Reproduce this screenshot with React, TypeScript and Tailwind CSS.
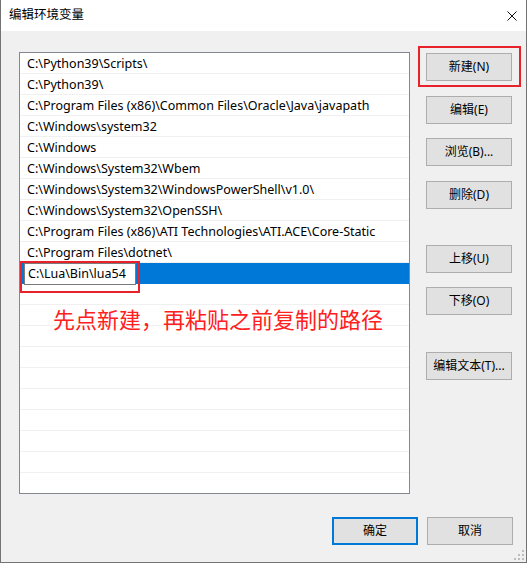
import React from "react";

const paths = [
  "C:\\Python39\\Scripts\\",
  "C:\\Python39\\",
  "C:\\Program Files (x86)\\Common Files\\Oracle\\Java\\javapath",
  "C:\\Windows\\system32",
  "C:\\Windows",
  "C:\\Windows\\System32\\Wbem",
  "C:\\Windows\\System32\\WindowsPowerShell\\v1.0\\",
  "C:\\Windows\\System32\\OpenSSH\\",
  "C:\\Program Files (x86)\\ATI Technologies\\ATI.ACE\\Core-Static",
  "C:\\Program Files\\dotnet\\",
];

const font = { fontFamily: '"Noto Sans", "Noto Sans CJK SC", sans-serif' };

function Btn({ label, className = "" }: { label: string; className?: string }) {
  return (
    <div
      className={`w-[86px] h-[28px] flex items-center justify-center bg-[#e1e1e1] border border-[#adadad] text-[12px] text-black ${className}`}
    >
      {label}
    </div>
  );
}

export default function App() {
  const rows = Array.from({ length: 22 }, (_, i) => i);
  return (
    <div
      className="relative w-[527px] h-[563px] flex flex-col bg-[#f0f0f0] border-x border-b border-[#737373] overflow-hidden"
      style={font}
    >
      {/* title bar */}
      <div className="h-[31px] bg-white flex items-center justify-between pl-[8px] shrink-0">
        <span className="text-[12.5px] text-black">编辑环境变量</span>
        <svg width="10" height="10" viewBox="0 0 10 10" className="mr-[9px]">
          <path d="M0.5 0.5 L9.5 9.5 M9.5 0.5 L0.5 9.5" stroke="#111" strokeWidth="1" />
        </svg>
      </div>

      <div className="flex-1 flex flex-col pt-[21px] pl-[18px] pr-[13px]">
        <div className="flex">
          {/* list */}
          <div className="w-[391px] h-[442px] border border-[#828790] bg-white overflow-hidden">
            {rows.map((i) => {
              if (i < paths.length) {
                return (
                  <div
                    key={i}
                    className="h-[21px] border-b border-[#f0f0f0] flex items-center pl-[7px] pt-[2px] text-[12.5px] text-black whitespace-nowrap"
                  >
                    {paths[i]}
                  </div>
                );
              }
              if (i === paths.length) {
                return (
                  <div key={i} className="h-[21px] bg-[#0078d7] flex items-center">
                    <div className="ml-[4px] w-[112px] h-[22px] bg-white border border-[#7a7a7a] flex items-center pl-[3px] pt-[1px] text-[12.5px] text-black">
                      C:\Lua\Bin\lua54
                    </div>
                  </div>
                );
              }
              return <div key={i} className="h-[21px] border-b border-[#f0f0f0]" />;
            })}
          </div>

          {/* buttons */}
          <div className="ml-[16px] flex flex-col pt-[1px]">
            <Btn label="新建(N)" />
            <Btn label="编辑(E)" className="mt-[15px]" />
            <Btn label="浏览(B)..." className="mt-[14px]" />
            <Btn label="删除(D)" className="mt-[15px]" />
            <Btn label="上移(U)" className="mt-[36px]" />
            <Btn label="下移(O)" className="mt-[14px]" />
            <Btn label="编辑文本(T)..." className="mt-[37px]" />
          </div>
        </div>

        {/* bottom buttons */}
        <div className="mt-[23px] flex justify-end gap-[9px]">
          <div className="w-[86px] h-[28px] flex items-center justify-center bg-[#e1e1e1] border-2 border-[#0078d7] text-[12px] text-black">
            确定
          </div>
          <Btn label="取消" />
        </div>
      </div>

      {/* resize grip */}
      <svg width="10" height="10" viewBox="0 0 10 10" className="absolute right-[2px] bottom-[2px]">
        <rect x="8" y="0" width="2" height="2" fill="#bdbdbd" />
        <rect x="4" y="4" width="2" height="2" fill="#bdbdbd" />
        <rect x="8" y="4" width="2" height="2" fill="#bdbdbd" />
        <rect x="0" y="8" width="2" height="2" fill="#bdbdbd" />
        <rect x="4" y="8" width="2" height="2" fill="#bdbdbd" />
        <rect x="8" y="8" width="2" height="2" fill="#bdbdbd" />
      </svg>

      {/* annotations */}
      <div className="absolute left-[417px] top-[46px] w-[103px] h-[41px] border-2 border-[#e8212b]" />
      <div className="absolute left-[19px] top-[261px] w-[120px] h-[32px] border-2 border-[#e8212b]" />
      <div
        className="absolute left-[52px] top-[307px] text-[22px] leading-[22px] text-[#ff2020] whitespace-nowrap"
        style={{ fontFamily: '"Noto Sans CJK SC", sans-serif' }}
      >
        先点新建，再粘贴之前复制的路径
      </div>
    </div>
  );
}
